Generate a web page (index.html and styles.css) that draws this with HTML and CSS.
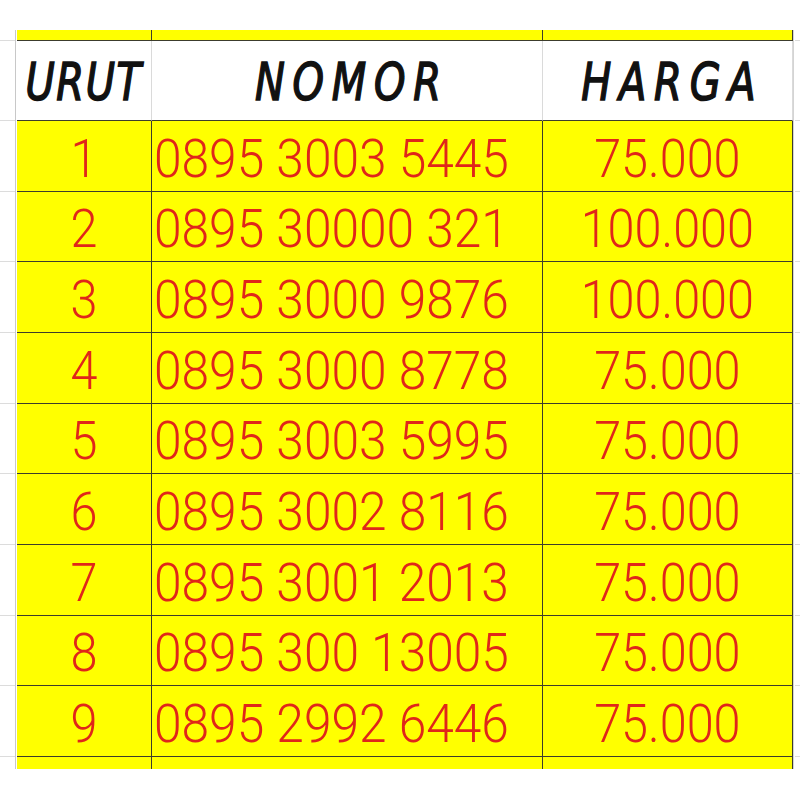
FILE: index.html
```html
<!DOCTYPE html>
<html>
<head>
<meta charset="utf-8">
<link rel="stylesheet" href="styles.css">
</head>
<body>
<div class="sheet">
  <div class="row strip top">
    <div class="g"></div><div class="edge"></div>
    <div class="c"></div><div class="c"></div><div class="c last"></div>
    <div class="edge r"></div><div class="g"></div>
  </div>
  <div class="row head">
    <div class="g"></div><div class="edge"></div>
    <div class="c"><span class="ht">URUT</span></div>
    <div class="c"><span class="ht wide">NOMOR</span></div>
    <div class="c last"><span class="ht wide">HARGA</span></div>
    <div class="edge r"></div><div class="g"></div>
  </div>

  <div class="row data">
    <div class="g"></div><div class="edge"></div>
    <div class="c num"><span class="t">1</span></div>
    <div class="c phone"><span class="t">0895 3003 5445</span></div>
    <div class="c last price"><span class="t">75.000</span></div>
    <div class="edge r"></div><div class="g"></div>
  </div>
  <div class="row data">
    <div class="g"></div><div class="edge"></div>
    <div class="c num"><span class="t">2</span></div>
    <div class="c phone"><span class="t">0895 30000 321</span></div>
    <div class="c last price"><span class="t">100.000</span></div>
    <div class="edge r"></div><div class="g"></div>
  </div>
  <div class="row data">
    <div class="g"></div><div class="edge"></div>
    <div class="c num"><span class="t">3</span></div>
    <div class="c phone"><span class="t">0895 3000 9876</span></div>
    <div class="c last price"><span class="t">100.000</span></div>
    <div class="edge r"></div><div class="g"></div>
  </div>
  <div class="row data">
    <div class="g"></div><div class="edge"></div>
    <div class="c num"><span class="t">4</span></div>
    <div class="c phone"><span class="t">0895 3000 8778</span></div>
    <div class="c last price"><span class="t">75.000</span></div>
    <div class="edge r"></div><div class="g"></div>
  </div>
  <div class="row data">
    <div class="g"></div><div class="edge"></div>
    <div class="c num"><span class="t">5</span></div>
    <div class="c phone"><span class="t">0895 3003 5995</span></div>
    <div class="c last price"><span class="t">75.000</span></div>
    <div class="edge r"></div><div class="g"></div>
  </div>
  <div class="row data">
    <div class="g"></div><div class="edge"></div>
    <div class="c num"><span class="t">6</span></div>
    <div class="c phone"><span class="t">0895 3002 8116</span></div>
    <div class="c last price"><span class="t">75.000</span></div>
    <div class="edge r"></div><div class="g"></div>
  </div>
  <div class="row data">
    <div class="g"></div><div class="edge"></div>
    <div class="c num"><span class="t">7</span></div>
    <div class="c phone"><span class="t">0895 3001 2013</span></div>
    <div class="c last price"><span class="t">75.000</span></div>
    <div class="edge r"></div><div class="g"></div>
  </div>
  <div class="row data">
    <div class="g"></div><div class="edge"></div>
    <div class="c num"><span class="t">8</span></div>
    <div class="c phone"><span class="t">0895 300 13005</span></div>
    <div class="c last price"><span class="t">75.000</span></div>
    <div class="edge r"></div><div class="g"></div>
  </div>
  <div class="row data">
    <div class="g"></div><div class="edge"></div>
    <div class="c num"><span class="t">9</span></div>
    <div class="c phone"><span class="t">0895 2992 6446</span></div>
    <div class="c last price"><span class="t">75.000</span></div>
    <div class="edge r"></div><div class="g"></div>
  </div>

  <div class="row strip bottom">
    <div class="g nb"></div><div class="edge"></div>
    <div class="c nb"></div><div class="c nb"></div><div class="c last nb"></div>
    <div class="edge r"></div><div class="g nb"></div>
  </div>
</div>
</body>
</html>
```

FILE: styles.css
```css
html, body {
  margin: 0;
  padding: 0;
  background: #ffffff;
}

.sheet {
  width: 800px;
  padding-top: 30px;
}

.row {
  display: grid;
  grid-template-columns: 15px 2px 135px 391px 250px 2px 1fr;
}

.g {
  border-bottom: 1px solid #dcdcdc;
}

.g.nb, .c.nb {
  border-bottom: none;
}

.edge {
  border-left: 1px solid #c8c8c8;
}

.edge.r {
  border-left: 1px solid #d4d4d4;
}

.c {
  background: #ffff00;
  border-right: 1px solid #3c3c2c;
  border-bottom: 1px solid #3c3c2c;
  display: flex;
  align-items: center;
  overflow: hidden;
}

.strip.top {
  height: 11px;
}

.strip.bottom {
  height: 12px;
}

.head {
  height: 80px;
}

.head .c {
  background: #ffffff;
  border-right: 1px solid #dadada;
  justify-content: center;
}

.ht {
  display: inline-block;
  font-family: "DejaVu Sans", sans-serif;
  font-weight: normal;
  font-style: italic;
  font-size: 52px;
  line-height: 1;
  color: #111111;
  -webkit-text-stroke: 1.6px #111111;
  transform: scaleX(0.77);
  letter-spacing: 2px;
  padding-top: 2px;
}

.ht.wide {
  letter-spacing: 10px;
  margin-right: -10px;
}

.data {
  height: 70.67px;
}

.t {
  display: inline-block;
  font-family: Roboto, "Liberation Sans", sans-serif;
  font-weight: 300;
  font-size: 54px;
  line-height: 1;
  color: #e0261a;
  white-space: nowrap;
  padding-top: 6px;
}

.num {
  justify-content: center;
}

.num .t {
  transform: scaleX(0.9);
}

.phone {
  justify-content: flex-start;
}

.phone .t {
  transform: scaleX(0.92);
  transform-origin: left center;
  margin-left: 2px;
}

.price {
  justify-content: center;
}

.price .t {
  transform: scaleX(0.9);
}
```
